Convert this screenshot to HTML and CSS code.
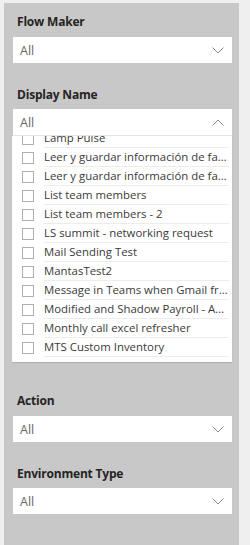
FILE: index.html
```html
<!DOCTYPE html>
<html lang="en">
<head>
  <meta charset="UTF-8" />
  <meta name="viewport" content="width=device-width, initial-scale=1.0"/>
  <title>Filters</title>
  <link rel="stylesheet" href="styles.css">
</head>
<body>

  <div class="pane">

    <div class="slicer">
      <div class="slicer-title">Flow Maker</div>
      <div class="dropdown">
        <span>All</span>
        <svg class="chevron" width="12" height="7" viewBox="0 0 12 7"><polyline points="0.5,0.5 6,6 11.5,0.5" /></svg>
      </div>
    </div>

    <div class="slicer open">
      <div class="slicer-title">Display Name</div>
      <div class="dropdown">
        <span>All</span>
        <svg class="chevron" width="12" height="7" viewBox="0 0 12 7"><polyline points="0.5,6.5 6,1 11.5,6.5" /></svg>
      </div>
      <div class="list">
        <div class="rows">
          <div class="row"><span class="box"></span><span class="text">Lamp Pulse</span></div>
          <div class="row"><span class="box"></span><span class="text">Leer y guardar información de facturas</span></div>
          <div class="row"><span class="box"></span><span class="text">Leer y guardar información de facturas 2</span></div>
          <div class="row"><span class="box"></span><span class="text">List team members</span></div>
          <div class="row"><span class="box"></span><span class="text">List team members - 2</span></div>
          <div class="row"><span class="box"></span><span class="text">LS summit - networking request</span></div>
          <div class="row"><span class="box"></span><span class="text">Mail Sending Test</span></div>
          <div class="row"><span class="box"></span><span class="text">MantasTest2</span></div>
          <div class="row"><span class="box"></span><span class="text">Message in Teams when Gmail from boss</span></div>
          <div class="row"><span class="box"></span><span class="text">Modified and Shadow Payroll - Approval</span></div>
          <div class="row"><span class="box"></span><span class="text">Monthly call excel refresher</span></div>
          <div class="row"><span class="box"></span><span class="text">MTS Custom Inventory</span></div>
        </div>
      </div>
    </div>

    <div class="slicer action">
      <div class="slicer-title">Action</div>
      <div class="dropdown">
        <span>All</span>
        <svg class="chevron" width="12" height="7" viewBox="0 0 12 7"><polyline points="0.5,0.5 6,6 11.5,0.5" /></svg>
      </div>
    </div>

    <div class="slicer">
      <div class="slicer-title">Environment Type</div>
      <div class="dropdown">
        <span>All</span>
        <svg class="chevron" width="12" height="7" viewBox="0 0 12 7"><polyline points="0.5,0.5 6,6 11.5,0.5" /></svg>
      </div>
    </div>

  </div>

</body>
</html>
```

FILE: styles.css
```css
body {
  margin: 0;
  background-color: #efefef;
  font-family: 'Open Sans', 'Noto Sans', sans-serif;
  color: #333;
}
.pane {
  margin: 3px 0 0 4px;
  width: 235px;
  height: 542px;
  box-sizing: border-box;
  background-color: #c8c8c8;
  padding: 11px 7px 0 9px;
}
.slicer { margin-bottom: 24px; }
.slicer.open { margin-bottom: 31px; }
.slicer-title {
  font-size: 12px;
  font-weight: 700;
  letter-spacing: -0.2px;
  line-height: 16px;
  color: #252423;
  padding-left: 4px;
  margin-bottom: 7px;
}
.open .slicer-title, .action + .slicer .slicer-title { margin-bottom: 6px; }
.dropdown {
  display: flex;
  align-items: center;
  justify-content: space-between;
  height: 26px;
  background: white;
  padding: 0 8px 0 7px;
  font-size: 12.5px;
  color: #666;
}
.chevron polyline {
  fill: none;
  stroke: #8a8a8a;
  stroke-width: 1;
}
.open .dropdown { border-bottom: 1px solid #e4e4e4; }
.list {
  margin-left: -1px;
  height: 226px;
  overflow: hidden;
  background: white;
  box-shadow: 0 1px 1px rgba(0,0,0,0.12);
}
.rows { margin-top: -7px; }
.row {
  display: flex;
  align-items: center;
  height: 19px;
  padding-left: 10px;
}
.box {
  flex: none;
  width: 10px;
  height: 10px;
  border: 1px solid #b0b0b0;
  margin-right: 10px;
}
.text {
  flex: 1;
  min-width: 0;
  height: 18px;
  line-height: 18px;
  margin-right: 3px;
  border-bottom: 1px solid #ececec;
  font-size: 11.4px;
  color: #3a3a3a;
  white-space: nowrap;
  overflow: hidden;
  text-overflow: ellipsis;
}
```
